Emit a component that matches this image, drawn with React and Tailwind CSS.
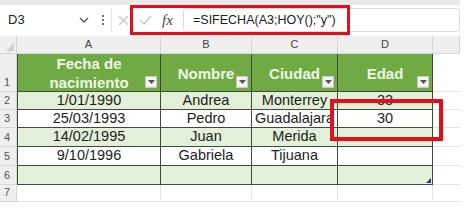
import React from "react";

const rows = [
  { n: 2, a: "1/01/1990", b: "Andrea", c: "Monterrey", d: "33", band: true },
  { n: 3, a: "25/03/1993", b: "Pedro", c: "Guadalajara", d: "30", band: false },
  { n: 4, a: "14/02/1995", b: "Juan", c: "Merida", d: "", band: true },
  { n: 5, a: "9/10/1996", b: "Gabriela", c: "Tijuana", d: "", band: false },
  { n: 6, a: "", b: "", c: "", d: "", band: true },
];

const FilterBtn = () => (
  <span className="absolute right-[3px] bottom-[3px] w-[12px] h-[12px] bg-[#f3f3f3] border border-[#c8c8c8] flex items-center justify-center">
    <svg width="7" height="4" viewBox="0 0 7 4">
      <path d="M0 0h7L3.5 4z" fill="#555" />
    </svg>
  </span>
);

const rowNum = "bg-[#efefef] border-b border-r border-[#d6d6d6] text-[11px] text-[#555] pl-[4px] flex items-end pb-[1px]";
const cell = "border-b border-r border-[#3f4a38] flex items-center justify-center text-[14.5px] text-[#1d1d1d] whitespace-nowrap overflow-visible";

const App = () => {
  return (
    <div
      className="relative w-[474px] h-[212px] bg-white overflow-hidden"
      style={{ fontFamily: '"Liberation Sans", Arial, sans-serif' }}
    >
      {/* franja superior */}
      <div className="h-[5px] w-[460px] bg-[#e9e9e9]" />

      {/* barra de fórmulas */}
      <div className="h-[30px] w-[460px] flex items-center bg-white">
        <div className="w-[95px] flex items-center justify-between pl-[8px] pr-[6px] text-[13px] text-[#222]">
          <span>D3</span>
          <svg width="10" height="6" viewBox="0 0 10 6">
            <path d="M1 1l4 4 4-4" stroke="#555" strokeWidth="1.3" fill="none" />
          </svg>
        </div>
        <div className="w-[16px] flex flex-col items-center gap-[2px]">
          <span className="w-[2px] h-[2px] bg-[#444] rounded-full" />
          <span className="w-[2px] h-[2px] bg-[#444] rounded-full" />
          <span className="w-[2px] h-[2px] bg-[#444] rounded-full" />
        </div>
        <div className="w-[70px] h-[24px] flex items-center gap-[10px] pl-[6px] border-l border-[#e2e2e2]">
          <svg width="11" height="11" viewBox="0 0 11 11">
            <path d="M1 1l9 9M10 1l-9 9" stroke="#c4c4c4" strokeWidth="1.2" />
          </svg>
          <svg width="13" height="10" viewBox="0 0 13 10">
            <path d="M1 5l4 4 7-8" stroke="#c4c4c4" strokeWidth="1.2" fill="none" />
          </svg>
          <span
            className="text-[15px] italic text-[#444]"
            style={{ fontFamily: '"Liberation Serif", serif' }}
          >
            fx
          </span>
        </div>
        <div className="flex-1 h-[24px] ml-[2px] border border-[#dcdcdc] rounded-[3px] flex items-center pl-[9px] text-[12.5px] text-[#222]">
          =SIFECHA(A3;HOY();"y")
        </div>
      </div>

      <div className="h-[1px]" />

      {/* hoja */}
      <div className="w-[460px] grid grid-cols-[17px_144px_91px_86px_95px_27px] grid-rows-[18px_38px_18px_18px_19px_19px_19px_17px]">
        {/* encabezados de columna */}
        <div className="bg-[#efefef] border-b border-r border-[#d6d6d6] flex items-end justify-end">
          <svg width="8" height="8" viewBox="0 0 8 8" className="mr-[2px] mb-[2px]">
            <path d="M8 0v8H0z" fill="#d0d0d0" />
          </svg>
        </div>
        {["A", "B", "C", "D", ""].map((l, i) => (
          <div
            key={i}
            className="bg-[#efefef] border-b border-r border-[#d6d6d6] flex items-center justify-center text-[11px] text-[#444]"
          >
            {l}
          </div>
        ))}

        {/* fila 1 encabezados de tabla */}
        <div className={rowNum}>1</div>
        <div className="relative bg-[#6faa45] border-b border-r border-l border-[#3f4a38] flex flex-col items-center justify-center font-bold text-[15px] leading-[19px] text-[#eef8e6]">
          <span>Fecha de</span>
          <span>nacimiento</span>
          <FilterBtn />
        </div>
        <div className="relative bg-[#6faa45] border-b border-r border-[#3f4a38] flex justify-center pt-[9px] font-bold text-[15px] text-[#eef8e6]">
          Nombre
          <FilterBtn />
        </div>
        <div className="relative bg-[#6faa45] border-b border-r border-[#3f4a38] flex justify-center pt-[9px] font-bold text-[15px] text-[#eef8e6]">
          Ciudad
          <FilterBtn />
        </div>
        <div className="relative bg-[#6faa45] border-b border-r border-[#3f4a38] flex justify-center pt-[9px] font-bold text-[15px] text-[#eef8e6]">
          Edad
          <FilterBtn />
        </div>
        <div className="border-b border-[#e3e3e3]" />

        {rows.map((r) => {
          const bg = r.band ? "bg-[#e2efd9]" : "bg-white";
          return (
            <React.Fragment key={r.n}>
              <div className={rowNum}>{r.n}</div>
              <div className={`${cell} ${bg} border-l`}>{r.a}</div>
              <div className={`${cell} ${bg}`}>{r.b}</div>
              <div className={`${cell} ${bg} relative z-10`}>{r.c}</div>
              <div className={`${cell} ${bg} relative`}>
                {r.d}
                {r.n === 6 && (
                  <svg width="5" height="5" viewBox="0 0 5 5" className="absolute right-[1px] bottom-[1px]">
                    <path d="M5 0v5H0z" fill="#1f3f7a" />
                  </svg>
                )}
              </div>
              <div className="border-b border-[#e3e3e3]" />
            </React.Fragment>
          );
        })}

        {/* fila 7 */}
        <div className={rowNum}>7</div>
        <div className="border-b border-r border-[#e3e3e3]" />
        <div className="border-b border-r border-[#e3e3e3]" />
        <div className="border-b border-r border-[#e3e3e3]" />
        <div className="border-b border-r border-[#e3e3e3]" />
        <div className="border-b border-[#e3e3e3]" />
      </div>

      {/* recuadros rojos */}
      <div className="absolute left-[130px] top-[5px] w-[220px] h-[30px] border-[3px] border-[#e3101b] z-20" />
      <div className="absolute left-[330px] top-[99px] w-[113px] h-[42px] border-[4px] border-[#e3101b] z-20" />
    </div>
  );
};

export default App;
